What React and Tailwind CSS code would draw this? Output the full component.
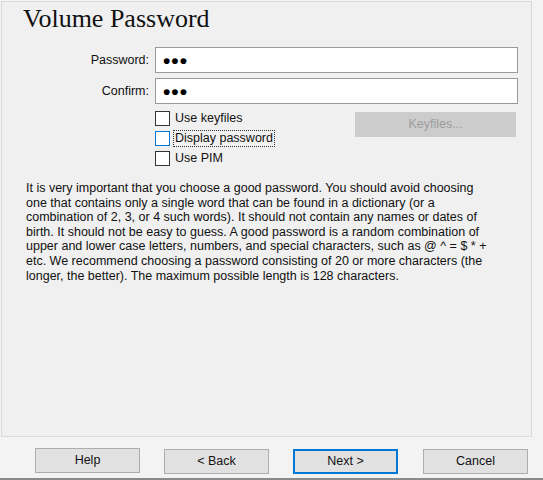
import React, { useState } from "react"

const ui = { fontFamily: '"Liberation Sans", Arial, sans-serif' }

const advice = [
  "It is very important that you choose a good password. You should avoid choosing",
  "one that contains only a single word that can be found in a dictionary (or a",
  "combination of 2, 3, or 4 such words). It should not contain any names or dates of",
  "birth. It should not be easy to guess. A good password is a random combination of",
  "upper and lower case letters, numbers, and special characters, such as @ ^ = $ * +",
  "etc. We recommend choosing a password consisting of 20 or more characters (the",
  "longer, the better). The maximum possible length is 128 characters.",
]

const Checkbox = ({ label, focused, hover }) => (
  <label className="flex h-[20px] items-center gap-[3px] text-[12.5px] text-[#111]">
    <span
      className={`h-[15px] w-[15px] border bg-white ${
        hover ? "border-[#0078d7]" : "border-[#333]"
      }`}
    />
    <span className={focused ? "border border-dotted border-[#333] px-px leading-[15px]" : "px-[2px]"}>
      {label}
    </span>
  </label>
)

const Button = ({ children, primary }) => (
  <button
    className={`h-[25px] w-[105px] bg-[#e1e1e1] text-[12.5px] text-[#111] ${
      primary ? "border-2 border-[#0078d7]" : "border border-[#adadad]"
    }`}
  >
    {children}
  </button>
)

export default function App() {
  const [password] = useState("abc")
  const [confirm] = useState("abc")

  return (
    <div className="flex h-[480px] w-[543px] flex-col bg-[#f3f3f3]" style={ui}>
      {/* wizard page */}
      <div className="ml-px mt-px flex h-[436px] w-[531px] flex-col border border-[#dadada] bg-[#f0f0f0] pt-[4px]">
        <h1
          className="pl-[21px] text-[26px] leading-none text-[#111]"
          style={{ fontFamily: '"Liberation Serif", "Times New Roman", serif' }}
        >
          Volume Password
        </h1>

        <div className="mt-[15px] flex flex-col gap-[5px]">
          <div className="flex items-center">
            <span className="w-[147px] text-right text-[12.5px] text-[#111]">Password:</span>
            <div className="ml-[6px] flex h-[26px] w-[363px] items-center border border-[#9a9a9a] bg-white pl-[7px] text-[21px] font-bold leading-none tracking-[1px]">
              {"•".repeat(password.length)}
            </div>
          </div>
          <div className="flex items-center">
            <span className="w-[147px] text-right text-[12.5px] text-[#111]">Confirm:</span>
            <div className="ml-[6px] flex h-[26px] w-[363px] items-center border border-[#9a9a9a] bg-white pl-[7px] text-[21px] font-bold leading-none tracking-[1px]">
              {"•".repeat(confirm.length)}
            </div>
          </div>
        </div>

        <div className="mt-[4px] flex pl-[153px]">
          <div className="flex flex-col">
            <Checkbox label="Use keyfiles" />
            <Checkbox label="Display password" focused hover />
            <Checkbox label="Use PIM" />
          </div>
          <button
            disabled
            className="ml-[80px] mt-[4px] h-[25px] w-[161px] bg-[#cccccc] text-[12.5px] text-[#9c9c9c]"
          >
            Keyfiles...
          </button>
        </div>

        <p className="mt-[13px] pl-[24px] text-[12.5px] leading-[14.6px] whitespace-nowrap text-[#111]">
          {advice.map((line) => (
            <span key={line} className="block">
              {line}
            </span>
          ))}
        </p>
      </div>

      {/* wizard buttons */}
      <div className="mt-[11px] flex pl-[35px]">
        <Button>Help</Button>
        <div className="ml-[24px]">
          <Button>&lt; Back</Button>
        </div>
        <div className="ml-[24px]">
          <Button primary>Next &gt;</Button>
        </div>
        <div className="ml-[25px]">
          <Button>Cancel</Button>
        </div>
      </div>
      <div className="mt-auto h-[2px] bg-[#8a8a8a]" />
    </div>
  )
}
